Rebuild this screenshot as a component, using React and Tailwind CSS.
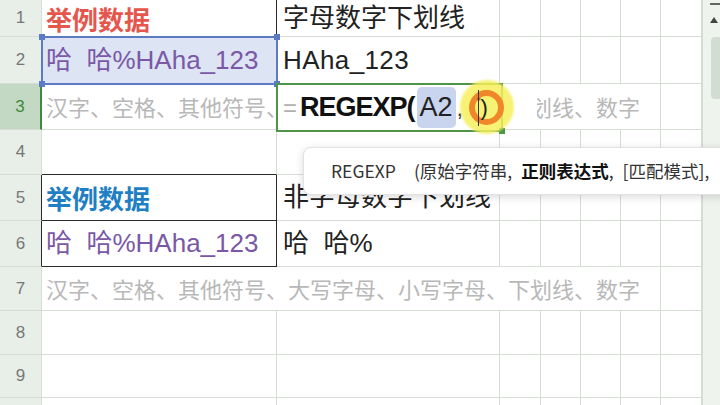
import React from "react";
import clsx from "clsx";

const font = "font-['Liberation_Sans','Noto_Sans_CJK_SC',sans-serif]";
const cjk = "font-['Noto_Sans_CJK_SC',sans-serif]";

const line = "border-[#d5ddd5]";

const Header = ({ label, active, dark }) => (
  <div
    className={clsx(
      "w-[42px] shrink-0 h-full flex items-center justify-center border-b text-[17px]",
      line,
      active
        ? "bg-[#c4d9c4] text-[#3f8a3f] border-r-2 border-r-[#3f8a3f]"
        : "bg-[#e8eee8] text-[#777] border-r",
      dark && "border-r-[#2a2a2a]"
    )}
  >
    {label}
  </div>
);

const Cell = ({ w, className, children }) => (
  <div
    className={clsx(
      "shrink-0 h-full border-r border-b flex items-center whitespace-nowrap overflow-visible",
      line,
      w,
      className
    )}
  >
    {children}
  </div>
);

const Small = () => (
  <>
    <Cell w="w-[41px]" />
    <Cell w="w-[40px]" />
    <Cell w="w-[40px]" />
    <Cell w="w-[40px]" />
    <Cell w="w-[41px]" />
  </>
);

const Row = ({ h, children }) => <div className={clsx("flex", h)}>{children}</div>;

export default function App() {
  return (
    <div className={clsx("w-[720px] h-[405px] overflow-hidden bg-white flex", font)}>
      <div className="relative w-[702px] shrink-0">
        <Row h="h-[37px]">
          <Header label="1" />
          <Cell w="w-[235px]" className="pl-1 border-r-[#2a2a2a]">
            <span className={clsx("text-[26px] font-bold text-[#e5574d]", cjk)}>举例数据</span>
          </Cell>
          <Cell w="w-[223px]" className="pl-1.5">
            <span className="text-[26px] text-[#222]">字母数字下划线</span>
          </Cell>
          <Small />
        </Row>
        <Row h="h-[47px]">
          <Header label="2" />
          <Cell w="w-[235px]" className="pl-1 bg-[#dde4f4]">
            <span className="text-[26px] text-[#7a58a6] whitespace-pre">哈  哈%HAha_123</span>
          </Cell>
          <Cell w="w-[223px]" className="pl-1.5">
            <span className="text-[26px] text-[#222] tracking-[0.4px]">HAha_123</span>
          </Cell>
          <Small />
        </Row>
        <Row h="h-[46px]">
          <Header label="3" active />
          <Cell w="w-[619px]" className="pl-1">
            <span className={clsx("text-[22px] text-[#b8b8b8]", cjk)}>
              汉字、空格、其他符号、大写字母、小写字母、下划线、数字
            </span>
          </Cell>
          <Cell w="w-[41px]" />
        </Row>
        <Row h="h-[45px]">
          <Header label="4" />
          <Cell w="w-[235px]" className="border-b-[#2a2a2a]" />
          <Cell w="w-[223px]" />
          <Small />
        </Row>
        <Row h="h-[46px]">
          <Header label="5" dark />
          <Cell w="w-[235px]" className="pl-1 border-r-[#2a2a2a] border-b-[#2a2a2a]">
            <span className={clsx("text-[26px] font-bold text-[#1f7fc4]", cjk)}>举例数据</span>
          </Cell>
          <Cell w="w-[223px]" className="pl-1.5">
            <span className="text-[26px] text-[#222]">非字母数字下划线</span>
          </Cell>
          <Small />
        </Row>
        <Row h="h-[46px]">
          <Header label="6" dark />
          <Cell w="w-[235px]" className="pl-1 border-r-[#2a2a2a] border-b-[#2a2a2a]">
            <span className="text-[26px] text-[#7a58a6] whitespace-pre">哈  哈%HAha_123</span>
          </Cell>
          <Cell w="w-[223px]" className="pl-1.5">
            <span className="text-[26px] text-[#222] whitespace-pre">哈  哈%</span>
          </Cell>
          <Small />
        </Row>
        <Row h="h-[44px]">
          <Header label="7" />
          <Cell w="w-[619px]" className="pl-1">
            <span className={clsx("text-[22px] text-[#b8b8b8]", cjk)}>
              汉字、空格、其他符号、大写字母、小写字母、下划线、数字
            </span>
          </Cell>
          <Cell w="w-[41px]" />
        </Row>
        {["8", "9", "10"].map((n) => (
          <Row key={n} h={n === "9" ? "h-[43px]" : "h-[44px]"}>
            <Header label={n} />
            <Cell w="w-[235px]" />
            <Cell w="w-[223px]" />
            <Small />
          </Row>
        ))}

        {/* A2 reference selection */}
        <div className="absolute left-[41px] top-[36px] w-[237px] h-[49px] border-2 border-[#5b7cc4] pointer-events-none">
          <div className="absolute -left-[4px] -top-[4px] w-[6px] h-[6px] bg-[#5b7cc4]" />
          <div className="absolute -right-[4px] -top-[4px] w-[6px] h-[6px] bg-[#5b7cc4]" />
          <div className="absolute -left-[4px] -bottom-[4px] w-[6px] h-[6px] bg-[#5b7cc4]" />
          <div className="absolute -right-[4px] -bottom-[4px] w-[6px] h-[6px] bg-[#5b7cc4]" />
        </div>

        {/* cover behind the editor */}
        <div className="absolute left-[503px] top-[85px] w-[34px] h-[44px] bg-white" />

        {/* B3 editor */}
        <div className="absolute left-[276px] top-[83px] w-[227px] h-[49px] border-2 border-[#4d9447] bg-white flex items-center pl-[5px]">
          <span className="text-[24px] text-[#b0b0b0] mr-[3px]">=</span>
          <span className="text-[27px] font-bold text-[#111] tracking-[-1px]">REGEXP(</span>
          <span className="text-[27px] text-[#222] bg-[#c9d4ee] rounded-[5px] px-[3px] ml-[2px]">A2</span>
          <span className="text-[24px] text-[#333] ml-[1px]">,</span>
          <div className="absolute -right-[4px] -bottom-[4px] w-[6px] h-[6px] bg-[#4d9447]" />
        </div>

        {/* click highlight */}
        <div className="absolute left-[460px] top-[80px] w-[54px] h-[54px] rounded-full bg-[#f6ef5c]/85 blur-[1px]" />
        <div className="absolute left-[469px] top-[90px] w-[35px] h-[35px] rounded-full border-[6px] border-[#f0862a] flex items-center justify-center">
          <span className="text-[10px] text-[#333] -ml-[8px] -mt-[10px]">"</span>
          <span className="text-[22px] text-[#222] leading-none">)</span>
        </div>
        <div className="absolute left-[478px] top-[90px] w-[1px] h-[36px] bg-[#333]" />

        {/* tooltip */}
        <div
          className={clsx(
            "absolute left-[303px] top-[147px] w-[440px] h-[48px] bg-white rounded-[8px] border border-[#e2e2e2] shadow-[0_2px_8px_rgba(0,0,0,0.15)] flex items-center pl-[27px] text-[17.5px] text-[#333] whitespace-pre",
            cjk
          )}
        >
          <span>REGEXP</span>
          <span className="ml-[18px]">(原始字符串,</span>
          <b className="ml-[9px] font-bold text-[#111]">正则表达式</b>
          <span>,</span>
          <span className="ml-[9px]">[匹配模式],</span>
        </div>
      </div>

      {/* scrollbar */}
      <div className="w-[18px] shrink-0 bg-[#eef3ee] border-l border-[#d5ddd5] flex flex-col items-end">
        <div className="w-[10px] h-[2px] bg-[#666] mt-[3px]" />
        <div className="w-0 h-0 mt-[12px] mr-[2px] border-l-[4px] border-r-[4px] border-b-[6px] border-l-transparent border-r-transparent border-b-[#444]" />
        <div className="w-[9px] h-[62px] mt-[14px] bg-[#d3dcd3] rounded-l-[4px]" />
      </div>
    </div>
  );
}
